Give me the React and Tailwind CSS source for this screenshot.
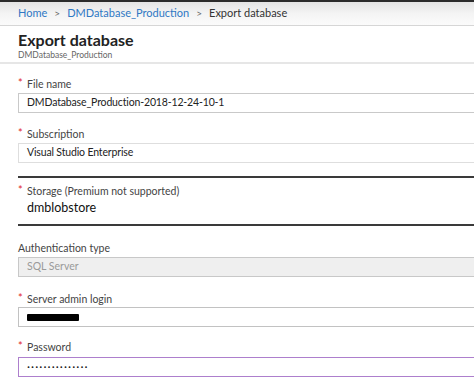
import React from "react";

const F = { fontFamily: 'Lato, "Open Sans", sans-serif' };

function Label({ text, required = true, className = "" }) {
  return (
    <div className={"flex items-center h-[14px] text-[10.5px] leading-[14px] text-[#444] " + className}>
      {required && <span className="text-[#e0262b] w-[9px] text-[11px] leading-[14px] -mt-[2px]">*</span>}
      <span>{text}</span>
    </div>
  );
}

export default function App() {
  return (
    <div className="w-[474px] h-[387px] overflow-hidden bg-white relative" style={F}>
      <div className="h-[2px] bg-[#2b2b2b]" />
      <div className="h-[24px] bg-gradient-to-b from-[#e4e4e4] via-[#f4f4f4] to-[#fbfbfb] border-b border-[#d6d6d6] flex items-center pl-[18px] text-[11px] text-[#444]">
        <span className="text-[#2f78c4]">Home</span>
        <span className="mx-[7px] text-[#666] text-[10px]">&gt;</span>
        <span className="text-[#2f78c4]">DMDatabase_Production</span>
        <span className="mx-[7px] text-[#666] text-[10px]">&gt;</span>
        <span className="text-[#333]">Export database</span>
      </div>
      <div className="h-[38px] border-b-2 border-[#e6e6e6] pl-[18px] pt-[4px]">
        <div className="text-[16px] leading-[20px] font-bold text-[#222]">Export database</div>
        <div className="text-[8.5px] leading-[11px] text-[#666]">DMDatabase_Production</div>
      </div>

      <div className="pl-[18px] flex flex-col">
        <Label text="File name" className="mt-[13px]" />
        <div className="mt-[2px] w-[480px] h-[20px] border border-[#c9c9c9] flex items-center pl-[8px] text-[10.5px] tracking-[-0.15px] text-[#222]">
          DMDatabase_Production-2018-12-24-10-1
        </div>

        <Label text="Subscription" className="mt-[14px]" />
        <div className="mt-[2px] w-[480px] h-[20px] border border-[#dedede] flex items-center pl-[8px] text-[10.5px] tracking-[-0.15px] text-[#222]">
          Visual Studio Enterprise
        </div>

        <div className="mt-[13px] w-[480px] h-[2px] bg-[#3a3a3a]" />
        <Label text="Storage (Premium not supported)" className="mt-[6px]" />
        <div className="text-[12.5px] leading-[18px] text-[#111] pl-[9px] mt-[1px]">dmblobstore</div>
        <div className="mt-[7px] w-[480px] h-[2px] bg-[#3a3a3a]" />

        <Label text="Authentication type" required={false} className="mt-[15px] text-[#9a9a9a]" />
        <div className="mt-[2px] w-[480px] h-[20px] border border-[#c8c8c8] bg-[#efefef] flex items-center pl-[8px] text-[10.5px] text-[#9a9a9a]">
          SQL Server
        </div>

        <Label text="Server admin login" className="mt-[15px]" />
        <div className="mt-[1px] w-[480px] h-[20px] border border-[#c2c2c2] flex items-center pl-[8px]">
          <div className="w-[52px] h-[7px] bg-black rounded-[1px]" />
        </div>

        <Label text="Password" className="mt-[13px]" />
        <div
          className="mt-[3px] w-[480px] h-[20px] border border-[#ad7fcd] flex items-center pl-[8px] text-[8px] tracking-[1.1px] text-[#222]"
          style={{ fontFamily: '"Open Sans", sans-serif' }}
        >
          •••••••••••••••
        </div>
      </div>
    </div>
  );
}
